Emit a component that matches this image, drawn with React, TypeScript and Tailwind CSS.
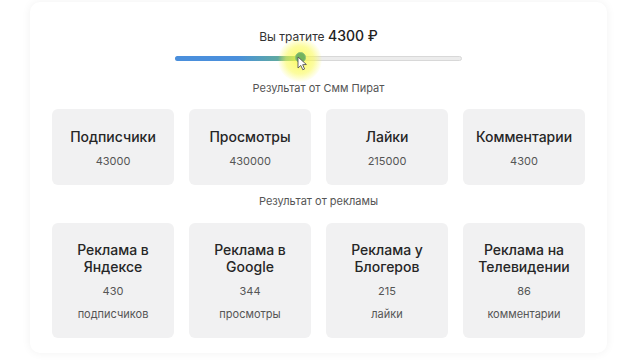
import React from "react";

const SMM = [
  { title: "Подписчики", value: "43000" },
  { title: "Просмотры", value: "430000" },
  { title: "Лайки", value: "215000" },
  { title: "Комментарии", value: "4300" },
];

const ADS = [
  { title: ["Реклама в", "Яндексе"], value: "430", unit: "подписчиков" },
  { title: ["Реклама в", "Google"], value: "344", unit: "просмотры" },
  { title: ["Реклама у", "Блогеров"], value: "215", unit: "лайки" },
  { title: ["Реклама на", "Телевидении"], value: "86", unit: "комментарии" },
];

function Slider() {
  return (
    <div className="relative w-[287px] h-[5px] mx-auto">
      <div className="absolute inset-0 rounded-full bg-[#ececec] border border-[#d8d8d8]" />
      <div className="absolute left-0 top-0 h-[5px] w-[125px] rounded-full bg-gradient-to-r from-[#4a8fdc] via-[#4a8fdc] to-[#6fb47a]" />
      {/* cursor highlight */}
      <div className="absolute left-[103px] top-[-18px] w-[44px] h-[44px] rounded-full bg-[radial-gradient(circle,rgba(250,250,60,0.8)_0%,rgba(250,250,80,0.55)_45%,rgba(255,255,120,0)_72%)]" />
      <div className="absolute left-[120px] top-[-4px] w-[11px] h-[11px] rounded-full bg-[#74b35e] border border-[#8fc27a]" />
      <svg className="absolute left-[122px] top-[0px]" width="11" height="15" viewBox="0 0 11 15">
        <path d="M1 1 L1 12 L3.8 9.4 L5.8 13.8 L7.6 13 L5.7 8.7 L9.4 8.5 Z" fill="#ffffff" stroke="#555" strokeWidth="0.9" strokeLinejoin="round" />
      </svg>
    </div>
  );
}

export default function App() {
  return (
    <div className="w-[640px] h-[360px] bg-white overflow-hidden" style={{ fontFamily: "Inter, 'Noto Sans', sans-serif" }}>
      <div className="ml-[30px] mt-[2px] w-[577px] bg-white rounded-[10px] shadow-[0_0_10px_rgba(0,0,0,0.06)] px-[22px] pt-[23px] pb-[15px] text-center">
        <div className="h-[20px] leading-[20px] text-[#333]">
          <span className="text-[12px]">Вы тратите </span>
          <span className="text-[14px] font-medium text-[#222]">4300 ₽</span>
        </div>
        <div className="mt-[11px]">
          <Slider />
        </div>
        <div className="mt-[19px] text-[11px] leading-[16px] text-[#555]">Результат от Смм Пират</div>
        <div className="mt-[13px] grid grid-cols-4 gap-[15px]">
          {SMM.map((c) => (
            <div key={c.title} className="h-[76px] rounded-[6px] bg-[#f1f1f2] pt-[18px]">
              <div className="text-[14px] leading-[20px] font-medium text-[#262626]">{c.title}</div>
              <div className="mt-[6px] text-[11px] leading-[16px] text-[#555]">{c.value}</div>
            </div>
          ))}
        </div>
        <div className="mt-[8px] text-[11px] leading-[16px] text-[#555]">Результат от рекламы</div>
        <div className="mt-[14px] grid grid-cols-4 gap-[15px]">
          {ADS.map((c) => (
            <div key={c.unit} className="h-[115px] rounded-[6px] bg-[#f1f1f2] pt-[18px]">
              <div className="text-[14px] leading-[17px] font-medium text-[#262626]">
                {c.title[0]}
                <br />
                {c.title[1]}
              </div>
              <div className="mt-[8px] text-[11px] leading-[16px] text-[#555]">{c.value}</div>
              <div className="mt-[7px] text-[11px] leading-[16px] text-[#555]">{c.unit}</div>
            </div>
          ))}
        </div>
      </div>
    </div>
  );
}
